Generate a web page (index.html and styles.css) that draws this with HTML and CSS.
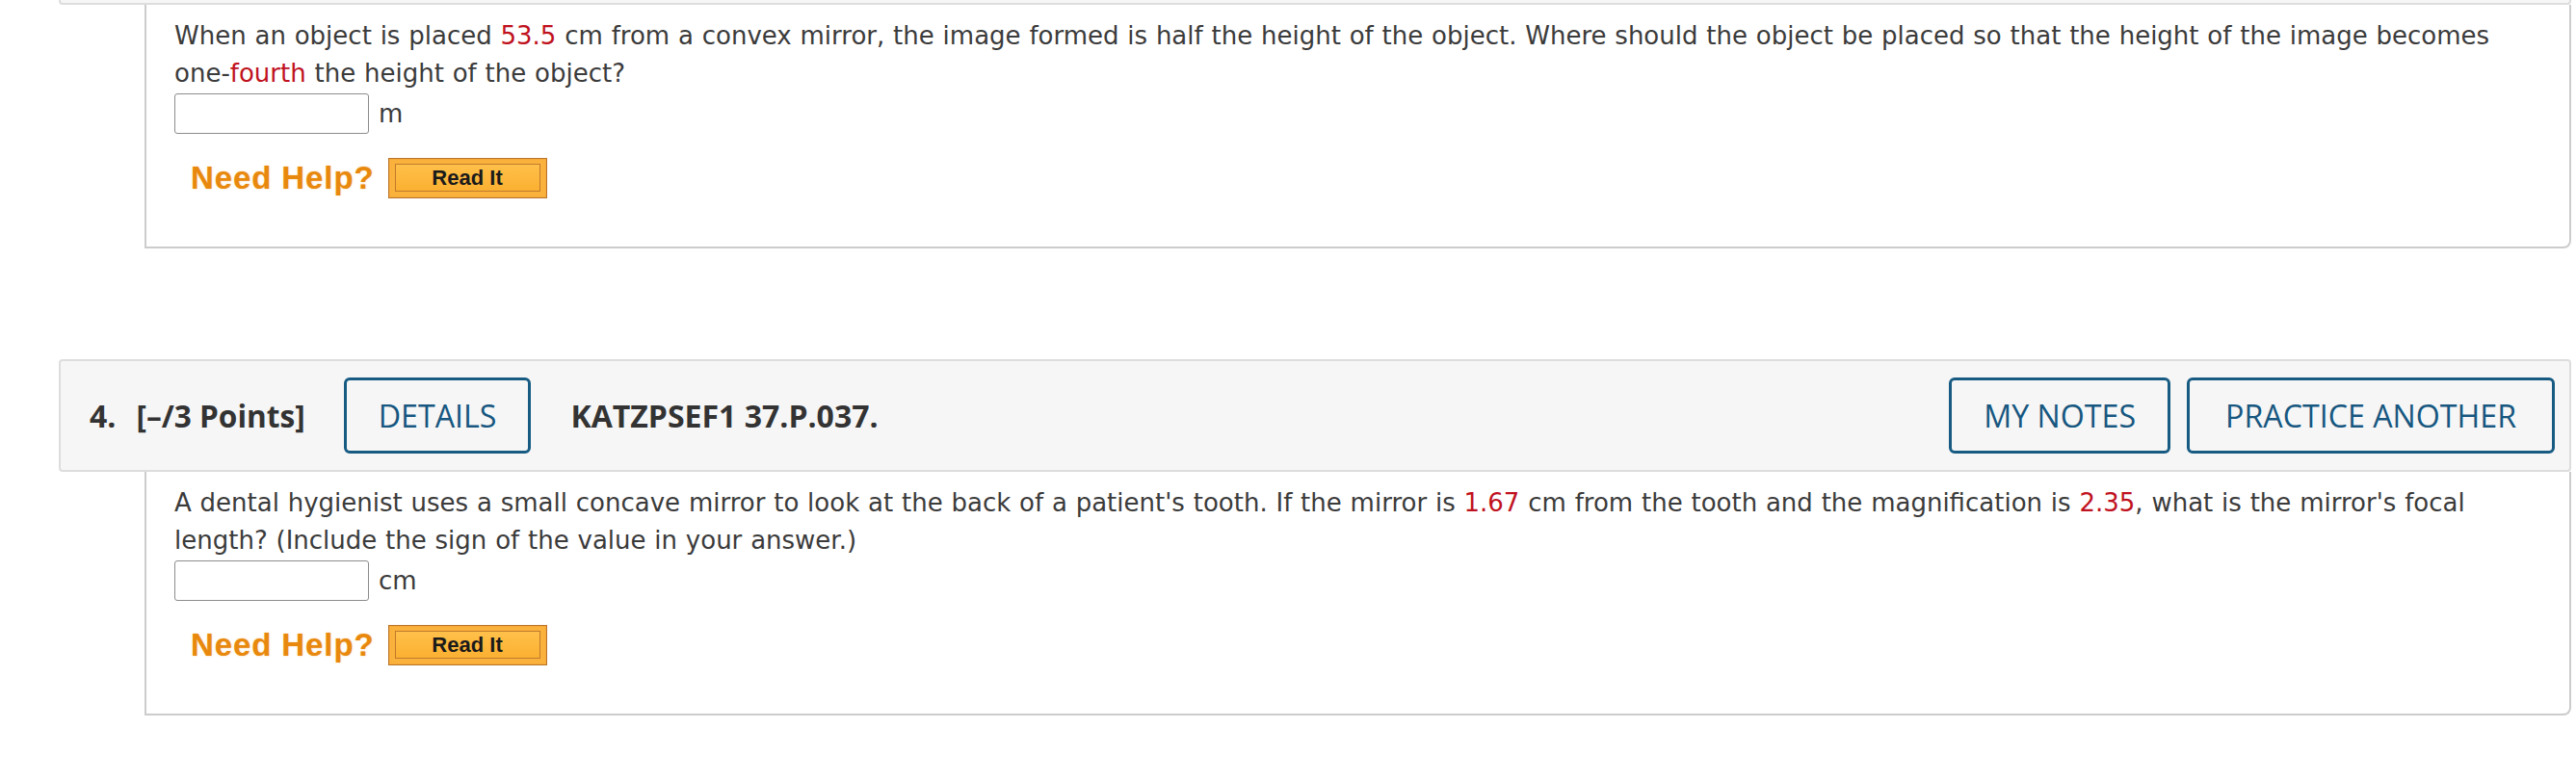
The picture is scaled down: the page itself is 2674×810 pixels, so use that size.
FILE: index.html
```html
<!DOCTYPE html>
<html lang="en">
<head>
<meta charset="utf-8">
<title>Questions</title>
<link rel="stylesheet" href="styles.css">
</head>
<body>
<div class="page">
  <div class="qhead qhead-cut"></div>
  <div class="qbody">
    <p class="qtext">When an object is placed <span class="red">53.5</span> cm from a convex mirror, the image formed is half the height of the object. Where should the object be placed so that the height of the image becomes one-<span class="red">fourth</span> the height of the object?</p>
    <div class="answer"><input class="ans-input" type="text"><span class="unit">m</span></div>
    <div class="help"><span class="need">Need Help?</span><span class="readit"><span class="readit-in">Read It</span></span></div>
  </div>

  <div class="qhead">
    <span class="qnum">4.</span>
    <span class="qpts">[–/3 Points]</span>
    <span class="btn btn-details">DETAILS</span>
    <span class="qcode">KATZPSEF1 37.P.037.</span>
    <span class="spacer"></span>
    <span class="btn">MY NOTES</span>
    <span class="btn btn-wide">PRACTICE ANOTHER</span>
  </div>
  <div class="qbody">
    <p class="qtext">A dental hygienist uses a small concave mirror to look at the back of a patient's tooth. If the mirror is <span class="red">1.67</span> cm from the tooth and the magnification is <span class="red">2.35</span>, what is the mirror's focal length? (Include the sign of the value in your answer.)</p>
    <div class="answer"><input class="ans-input" type="text"><span class="unit">cm</span></div>
    <div class="help"><span class="need">Need Help?</span><span class="readit"><span class="readit-in">Read It</span></span></div>
  </div>
</div>
</body>
</html>
```
FILE: styles.css
```css
html, body {
  margin: 0;
  padding: 0;
  background: #ffffff;
}
.page {
  margin-left: 61px;
  width: 2608px;
}
.qhead {
  box-sizing: border-box;
  display: flex;
  align-items: center;
  background: #f6f6f6;
  border: 2px solid #dddddd;
  border-radius: 4px;
  padding: 17px 15px 17px 30px;
  margin-top: 115px;
  font-family: "Open Sans", "Liberation Sans", sans-serif;
  color: #333333;
}
.qhead-cut {
  margin-top: 0;
  height: 5px;
  padding: 0;
  border-top: none;
  border-radius: 0 0 4px 4px;
}
.qnum {
  font-weight: 700;
  font-size: 32px;
}
.qpts {
  font-weight: 700;
  font-size: 31.6px;
  margin-left: 21px;
}
.qcode {
  font-weight: 700;
  font-size: 32px;
  margin-left: 41px;
}
.spacer {
  flex: 1;
}
.btn {
  box-sizing: border-box;
  display: inline-flex;
  align-items: center;
  height: 79px;
  padding: 0 33px;
  border: 3px solid #175b83;
  border-radius: 6px;
  color: #175780;
  font-size: 32.2px;
  font-weight: 500;
  margin-left: 17px;
}
.btn-details {
  margin-left: 40px;
}
.btn-wide {
  padding: 0 37px;
}
.qbody {
  margin-left: 89px;
  border: 2px solid #cccccc;
  border-top: none;
  border-radius: 0 0 8px 0;
  padding: 13px 70px 50px 29px;
  font-family: "DejaVu Sans", Verdana, sans-serif;
  font-size: 26px;
  word-spacing: 0.55px;
  color: #3b3b3b;
}
.qtext {
  margin: 0;
  line-height: 39px;
}
.red {
  color: #c0121e;
}
.answer {
  display: flex;
  align-items: center;
  margin-top: 1px;
  word-spacing: 0;
}
.ans-input {
  box-sizing: border-box;
  width: 202px;
  height: 42px;
  border: 1px solid #8c8c8c;
  border-radius: 3px;
  background: #ffffff;
  margin: 0;
}
.unit {
  margin-left: 10px;
}
.help {
  display: flex;
  align-items: center;
  margin-top: 25px;
  padding-left: 17px;
  word-spacing: 0;
}
.need {
  font-family: "Liberation Sans", Arial, sans-serif;
  font-weight: 700;
  font-size: 33px;
  letter-spacing: 0.9px;
  color: #e8890e;
  text-shadow: 0 0 2px rgba(240, 150, 40, 0.45);
}
.readit {
  box-sizing: border-box;
  display: inline-flex;
  width: 165px;
  height: 42px;
  margin-left: 14px;
  padding: 5px 6px 6px 6px;
  background: #fbb23c;
  border: 1px solid #b8742a;
  box-shadow: inset 0 0 0 1px #f6a93a;
}
.readit-in {
  flex: 1;
  display: flex;
  align-items: center;
  justify-content: center;
  border: 1px solid #c07a2d;
  background: linear-gradient(#ffc04a, #fbb031);
  font-family: "Liberation Sans", Arial, sans-serif;
  font-weight: 700;
  font-size: 22px;
  color: #1a1a1a;
}
```
